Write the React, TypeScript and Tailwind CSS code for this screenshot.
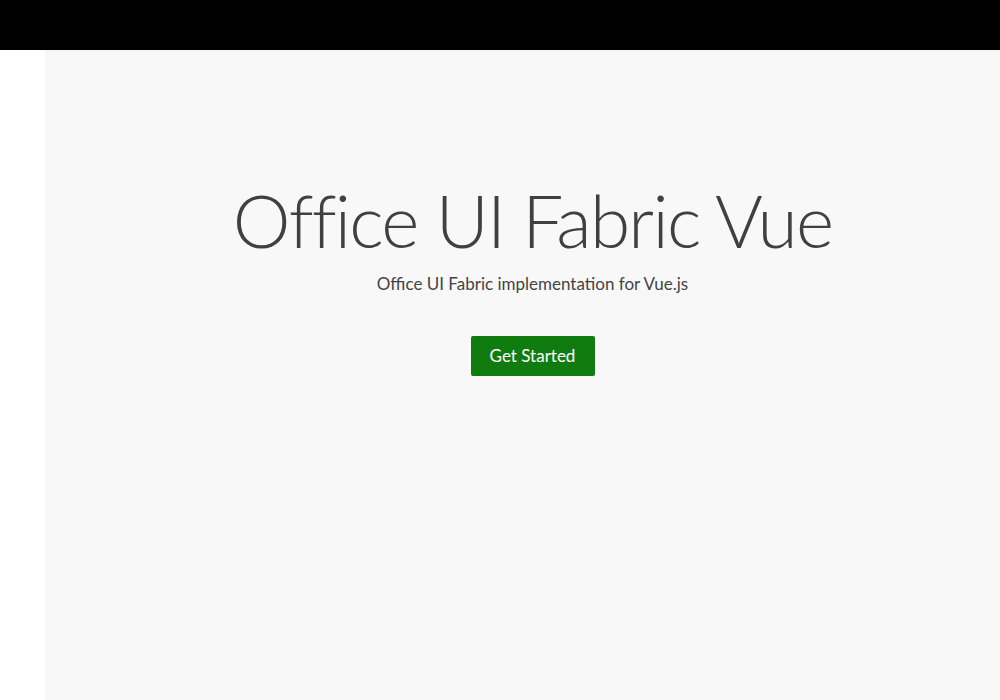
export default function App() {
  return (
    <div className="min-h-[700px] flex flex-col bg-white" style={{ fontFamily: 'Lato, "Open Sans", sans-serif' }}>
      <header className="h-[50px] bg-black shrink-0" />
      <div className="flex flex-1">
        <aside className="w-[45px] bg-white shrink-0" />
        <main className="flex-1 bg-[#f8f8f8] border-t-2 border-[#f4f4f4] min-h-[650px]">
          <section className="flex flex-col items-center pl-[20px] pt-[132px]">
            <h1 className="text-[73px] leading-[72px] font-light text-[#404040] tracking-[-1.75px] [font-variant-ligatures:none]">
              Office UI Fabric Vue
            </h1>
            <p className="mt-[16px] text-[17px] leading-[24px] text-[#444]">
              Office UI Fabric implementation for Vue.js
            </p>
            <button className="mt-[40px] h-[40px] w-[124px] rounded-[2px] bg-[#107c10] text-white text-[17px]">
              Get Started
            </button>
          </section>
        </main>
      </div>
    </div>
  )
}
